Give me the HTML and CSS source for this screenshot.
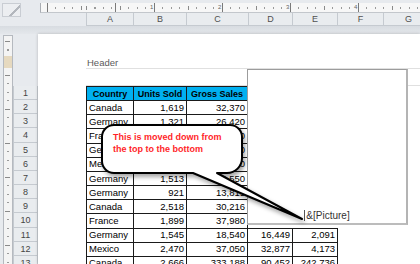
FILE: index.html
```html
<!DOCTYPE html>
<html>

<head>
    <title>Page Layout - Header Picture</title>
    <meta name="viewport" content="width=device-width, initial-scale=1.0">
    <link rel="stylesheet" href="styles.css">
</head>

<body>
    <div class="app">
        <div class="corner"></div>
        <div class="hruler">
            <span class="num n1">1</span>
            <span class="num n2">2</span>
            <span class="num n3">3</span>
            <span class="num n4">4</span>
        </div>
        <div class="colheads">
            <span class="ca">A</span>
            <span class="cb">B</span>
            <span class="cc">C</span>
            <span class="cd">D</span>
            <span class="ce">E</span>
            <span class="cf">F</span>
            <span class="cg">G</span>
        </div>
        <div class="band"></div>
        <div class="side">
            <div class="vruler"><div class="vmargin"></div></div>
            <div class="rowheads">
                <span>1</span><span>2</span><span>3</span><span>4</span><span>5</span>
                <span>6</span><span>7</span><span>8</span><span>9</span><span>10</span>
                <span>11</span><span>12</span><span>13</span>
            </div>
        </div>
        <div class="page">
            <div class="hdr-label">Header</div>
            <div class="hdr-box"></div>
            <table class="sheet">
                <colgroup>
                    <col class="w-a"><col class="w-b"><col class="w-c"><col class="w-d"><col class="w-e">
                </colgroup>
                <tr class="head">
                    <th>Country</th><th>Units Sold</th><th>Gross Sales</th><td class="e"></td><td class="e"></td>
                </tr>
                <tr><td>Canada</td><td class="n">1,619</td><td class="n">32,370</td><td class="e"></td><td class="e"></td></tr>
                <tr><td>Germany</td><td class="n">1,321</td><td class="n">26,420</td><td class="e"></td><td class="e"></td></tr>
                <tr><td>France</td><td class="n">2,178</td><td class="n">43,570</td><td class="e"></td><td class="e"></td></tr>
                <tr><td>Germany</td><td class="n">1,346</td><td class="n">26,920</td><td class="e"></td><td class="e"></td></tr>
                <tr><td>Mexico</td><td class="n">1,883</td><td class="n">28,260</td><td class="e"></td><td class="e"></td></tr>
                <tr><td>Germany</td><td class="n">1,513</td><td class="n">29,550</td><td class="e"></td><td class="e"></td></tr>
                <tr><td>Germany</td><td class="n">921</td><td class="n">13,815</td><td class="e"></td><td class="e"></td></tr>
                <tr><td>Canada</td><td class="n">2,518</td><td class="n">30,216</td><td class="e"></td><td class="e"></td></tr>
                <tr><td>France</td><td class="n">1,899</td><td class="n">37,980</td><td class="e"></td><td class="e"></td></tr>
                <tr><td>Germany</td><td class="n">1,545</td><td class="n">18,540</td><td class="n">16,449</td><td class="n">2,091</td></tr>
                <tr><td>Mexico</td><td class="n">2,470</td><td class="n">37,050</td><td class="n">32,877</td><td class="n">4,173</td></tr>
                <tr><td>Canada</td><td class="n">2,666</td><td class="n">333,188</td><td class="n">90,452</td><td class="n">242,736</td></tr>
            </table>
            <div class="picture"><span class="caret"></span>&amp;[Picture]</div>
        </div>

        <!-- callout pointing at the picture code -->
        <svg class="callout" width="420" height="264" viewBox="0 0 420 264">
            <path class="bubble" d="M114,125 H230 A12,12 0 0 1 242,137 V158 A15,15 0 0 1 227,173 H217 L302,219 L193,173 H114 A12,12 0 0 1 102,161 V137 A12,12 0 0 1 114,125 Z" />
            <text x="113" y="140">This is moved down from</text>
            <text x="113" y="151.5">the top to the bottom</text>
        </svg>
    </div>
</body>

</html>
```

FILE: styles.css
```css
body {
    margin: 0;
    font-family: "Liberation Sans", Arial, sans-serif;
    background-color: #e7eaee;
}

.app {
    position: relative;
    display: grid;
    grid-template-columns: 38px 382px;
    grid-template-rows: 12px 14px 8px 230px;
    width: 420px;
    height: 264px;
    overflow: hidden;
    background-color: #e7eaee;
}

/* top-left select-all box */
.corner {
    grid-column: 1;
    grid-row: 1 / 3;
    width: 17px;
    height: 12px;
    margin: 3px 0 0 2px;
    border: 1px solid #c9cdd3;
    background: linear-gradient(135deg, #eceef1 60%, #b3b7bd 60%, #b3b7bd 72%, #eceef1 72%);
}

.hruler {
    position: relative;
    grid-column: 2;
    grid-row: 1;
    margin: 3px 0 0 2px;
    height: 9px;
    border-left: 1px solid #a9adb3;
    border-bottom: 1px solid #c3c7cc;
    background-color: #f7f7f7;
    background-image:
        repeating-linear-gradient(90deg, #7a7a7a 0 1px, transparent 1px 68px),
        repeating-linear-gradient(90deg, #8a8a8a 0 1px, transparent 1px 34px),
        repeating-linear-gradient(90deg, #9a9a9a 0 1px, transparent 1px 8.5px);
    background-size: 100% 9px, 100% 4px, 100% 2px;
    background-position: 113px 0, 45px 3px, 45px 4px;
    background-repeat: repeat-x;
}

.hruler .num {
    position: absolute;
    top: 1px;
    font-size: 6px;
    color: #666;
}

.n1 { left: 109px; }
.n2 { left: 177px; }
.n3 { left: 245px; }
.n4 { left: 313px; }

.colheads {
    grid-column: 2;
    grid-row: 2;
    display: flex;
    padding-left: 48px;
}

.colheads span {
    flex: none;
    box-sizing: border-box;
    height: 14px;
    line-height: 14px;
    text-align: center;
    font-size: 9px;
    color: #505050;
    background-color: #e9ecef;
    border-left: 1px solid #c5cad0;
    border-bottom: 1px solid #c5cad0;
}

.ca { width: 47px; }
.cb { width: 53px; }
.cc { width: 62px; }
.cd { width: 44px; }
.ce { width: 45px; }
.cf { width: 46px; }
.cg { width: 50px; }

.band {
    grid-column: 1 / 3;
    grid-row: 3;
    background: linear-gradient(#d8dce1, #e4e7eb);
}

.side {
    grid-column: 1;
    grid-row: 4;
    display: flex;
}

.vruler {
    box-sizing: border-box;
    width: 10px;
    margin: 1px 0 0 3px;
    border: 1px solid #b5b9bf;
    border-bottom: none;
    background-color: #f4f4f4;
    background-image:
        repeating-linear-gradient(180deg, #8a8a8a 0 1px, transparent 1px 34px),
        repeating-linear-gradient(180deg, #9a9a9a 0 1px, transparent 1px 8.5px);
    background-size: 5px 100%, 2px 100%;
    background-position: 1px 5px, 3px 5px;
    background-repeat: repeat-y;
}

.vmargin {
    height: 12px;
    margin-top: 20px;
    background-color: #e6d9bf;
}

.rowheads {
    display: flex;
    flex-direction: column;
    width: 25px;
    margin-top: 52px;
}

.rowheads span {
    box-sizing: border-box;
    height: 14.17px;
    line-height: 14px;
    text-align: center;
    font-size: 9px;
    color: #444;
    background-color: #e9ecef;
    border: 1px solid #c5cad0;
    border-top: none;
}

.page {
    position: relative;
    grid-column: 2;
    grid-row: 4;
    padding-left: 48px;
    background-color: #fff;
    box-shadow: 0 0 3px rgba(0, 0, 0, .22);
}

.hdr-label {
    height: 10px;
    margin-top: 24px;
    padding-left: 1px;
    line-height: 10px;
    font-size: 9.5px;
    color: #5a5a5a;
}

.hdr-box {
    box-sizing: border-box;
    height: 18px;
    border-top: 1px solid #e0e0e0;
    border-bottom: 1px solid #e0e0e0;
}

.sheet {
    border-collapse: collapse;
    table-layout: fixed;
    width: 251px;
    font-size: 9.5px;
    color: #000;
}

.w-a { width: 47px; }
.w-b { width: 53px; }
.w-c { width: 61px; }
.w-d { width: 45px; }
.w-e { width: 45px; }

.sheet tr {
    height: 14.17px;
}

.sheet td,
.sheet th {
    padding: 0 2px;
    border: 1px solid #1a1a1a;
    line-height: 12px;
    white-space: nowrap;
    overflow: hidden;
}

.sheet th {
    font-size: 9px;
    font-weight: bold;
    text-align: center;
    background-color: #00b0f0;
}

.sheet td.n {
    text-align: right;
}

.sheet td.e {
    border: none;
}

.picture {
    position: absolute;
    left: 209px;
    top: 35px;
    box-sizing: border-box;
    width: 161px;
    height: 156px;
    display: flex;
    align-items: flex-end;
    justify-content: center;
    padding-bottom: 2px;
    font-size: 10px;
    line-height: 11px;
    color: #333;
    background-color: #fff;
    border: 1px solid #9c9c9c;
    border-right: 2px solid #b4b4b4;
    border-bottom: 2px solid #bcbcbc;
}

.caret {
    width: 1px;
    height: 11px;
    margin-right: 1px;
    background-color: #555;
}

.callout {
    position: absolute;
    left: 0;
    top: 0;
    pointer-events: none;
}

.callout .bubble {
    fill: #fff;
    stroke: #000;
    stroke-width: 2;
    stroke-linejoin: round;
    filter: drop-shadow(2px 3px 2px rgba(0, 0, 0, .35));
}

.callout text {
    font-family: "Liberation Sans", Arial, sans-serif;
    font-size: 9px;
    font-weight: bold;
    fill: #ff1f2a;
}
```
